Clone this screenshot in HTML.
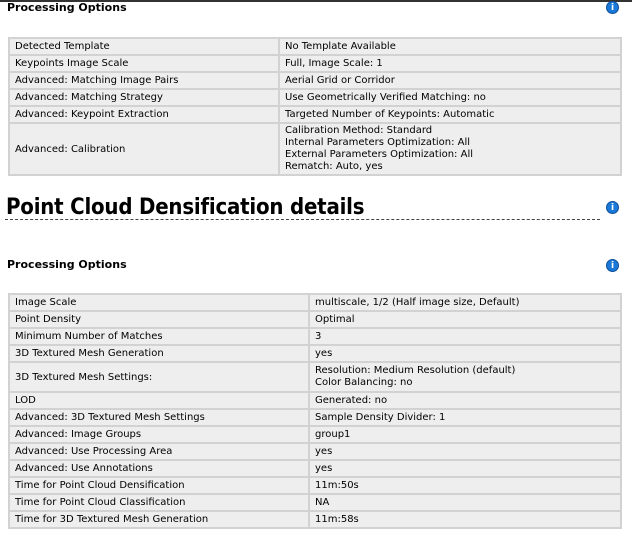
<html><head><style>
body{margin:0;width:632px;height:539px;overflow:hidden;background:#fff;font-family:"DejaVu Sans","Liberation Sans",sans-serif;position:relative;color:#000}
.topline{position:absolute;left:0;top:0;width:632px;height:2px;background:#333}
.h3{position:absolute;left:7px;font-size:11px;font-weight:bold}
.h1{position:absolute;left:6px;top:195px;font-family:"DejaVu Sans Condensed","DejaVu Sans",sans-serif;font-stretch:condensed;font-size:22px;font-weight:bold;letter-spacing:-0.2px}
.dash{position:absolute;left:5px;top:219px;width:595px;border-top:1px dashed #444}
.info{position:absolute;width:13px;height:13px;border-radius:50%;background:#1a78d8;border:1px solid #0d4f9a;box-sizing:border-box;color:#fff;font:bold 9px "DejaVu Sans",sans-serif;text-align:center;line-height:12px}
table{position:absolute;left:8px;width:614px;border-collapse:separate;border-spacing:2px;background:#d2d2d2;font-size:10px}
td{background:#eeeeee;padding:0 5px;height:15px;line-height:15px;vertical-align:middle;white-space:nowrap}
td.m{line-height:12px;padding:1px 5px}
</style></head><body>
<div class="topline"></div>
<div class="h3" style="top:1px">Processing Options</div>
<div class="info" style="left:606px;top:1px">i</div>
<table style="top:37px">
<tr><td style="width:258px">Detected Template</td><td>No Template Available</td></tr>
<tr><td>Keypoints Image Scale</td><td>Full, Image Scale: 1</td></tr>
<tr><td>Advanced: Matching Image Pairs</td><td>Aerial Grid or Corridor</td></tr>
<tr><td>Advanced: Matching Strategy</td><td>Use Geometrically Verified Matching: no</td></tr>
<tr><td>Advanced: Keypoint Extraction</td><td>Targeted Number of Keypoints: Automatic</td></tr>
<tr><td>Advanced: Calibration</td><td class="m">Calibration Method: Standard<br>Internal Parameters Optimization: All<br>External Parameters Optimization: All<br>Rematch: Auto, yes</td></tr>
</table>
<div class="h1">Point Cloud Densification details</div>
<div class="dash"></div>
<div class="info" style="left:606px;top:201px">i</div>
<div class="h3" style="top:258px">Processing Options</div>
<div class="info" style="left:606px;top:259px">i</div>
<table style="top:293px">
<tr><td style="width:288px">Image Scale</td><td>multiscale, 1/2 (Half image size, Default)</td></tr>
<tr><td>Point Density</td><td>Optimal</td></tr>
<tr><td>Minimum Number of Matches</td><td>3</td></tr>
<tr><td>3D Textured Mesh Generation</td><td>yes</td></tr>
<tr><td>3D Textured Mesh Settings:</td><td class="m" style="padding-top:2px;padding-bottom:2px">Resolution: Medium Resolution (default)<br>Color Balancing: no</td></tr>
<tr><td>LOD</td><td>Generated: no</td></tr>
<tr><td>Advanced: 3D Textured Mesh Settings</td><td>Sample Density Divider: 1</td></tr>
<tr><td>Advanced: Image Groups</td><td>group1</td></tr>
<tr><td>Advanced: Use Processing Area</td><td>yes</td></tr>
<tr><td>Advanced: Use Annotations</td><td>yes</td></tr>
<tr><td>Time for Point Cloud Densification</td><td>11m:50s</td></tr>
<tr><td>Time for Point Cloud Classification</td><td>NA</td></tr>
<tr><td>Time for 3D Textured Mesh Generation</td><td>11m:58s</td></tr>
</table>
</body></html>
